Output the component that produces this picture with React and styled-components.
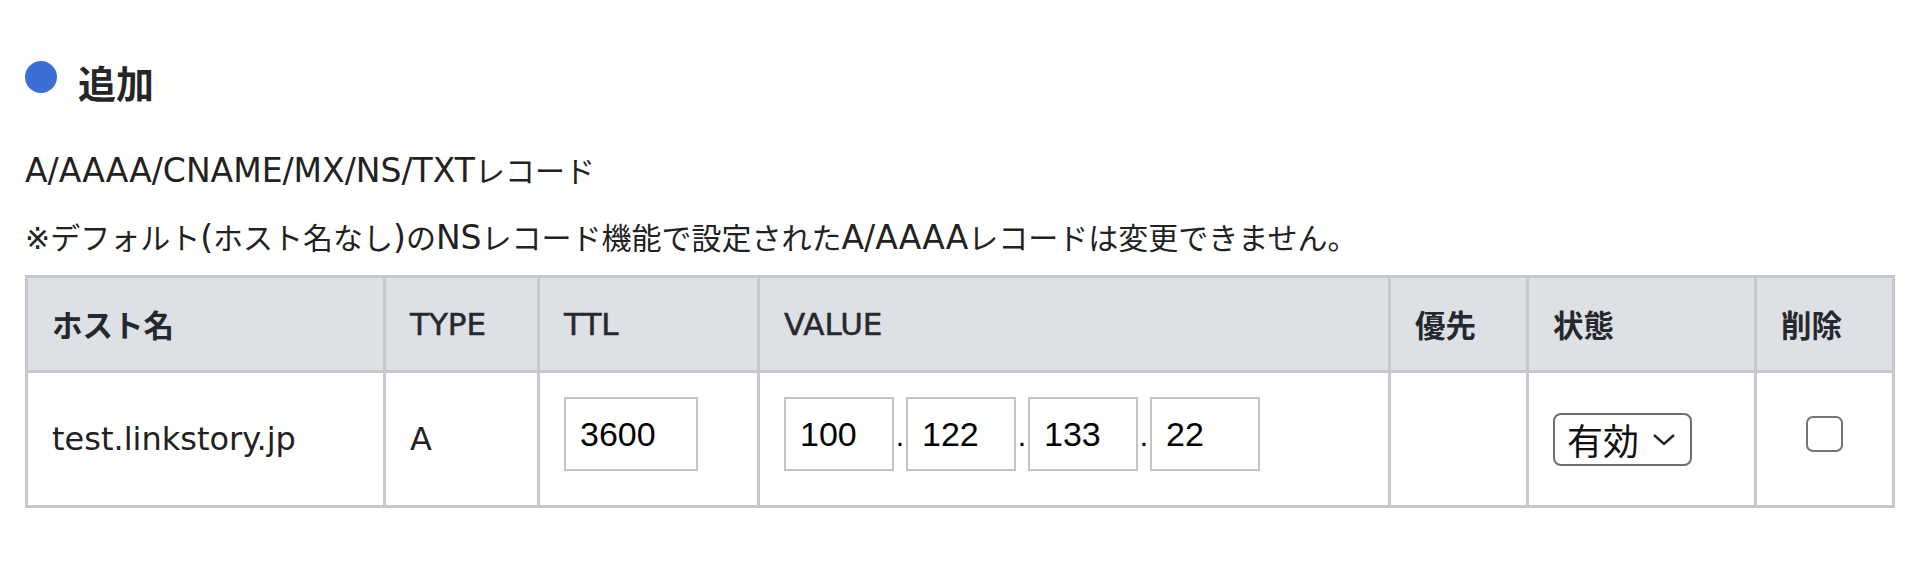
import React from "react";
import styled, { createGlobalStyle } from "styled-components";

const GlobalStyle = createGlobalStyle`
  html, body {
    margin: 0;
    padding: 0;
    background: #fff;
  }
  body {
    font-family: "Noto Sans CJK JP", "Noto Sans", sans-serif;
    color: #222;
  }
`;

const mixed = `"DejaVu Sans", "Noto Sans CJK JP", sans-serif`;

const Page = styled.div`
  padding: 61px 38px 40px 25px;
`;

const Heading = styled.h2`
  display: flex;
  align-items: center;
  gap: 21px;
  margin: 0;
  font-size: 38px;
  line-height: 42px;
  font-weight: 700;
  color: #262626;
`;

const Dot = styled.span`
  flex: none;
  width: 32px;
  height: 32px;
  margin-bottom: 10px;
  border-radius: 50%;
  background: #3b6fd6;
`;

const Note = styled.p`
  margin: ${(p) => p.$top}px 0 0;
  font-family: ${mixed};
  font-size: 30px;
  line-height: 40px;
  color: #222;
`;

const Latin = styled.span`
  font-size: 33px;
`;

const Table = styled.table`
  width: 1869px;
  margin-top: 16px;
  border-collapse: collapse;
  table-layout: fixed;
  border: 3px solid #c6c8cc;
`;

const Col = styled.col`
  width: ${(p) => p.$w}px;
`;

const Th = styled.th`
  height: 92px;
  padding: 0 24px;
  border: 3px solid #c6c8cc;
  background: #dde0e5;
  text-align: left;
  font-family: ${(p) => (p.$latin ? `"DejaVu Sans", sans-serif` : `"Noto Sans CJK JP", sans-serif`)};
  font-size: ${(p) => (p.$latin ? 31 : 30.5)}px;
  font-weight: ${(p) => (p.$latin ? 400 : 700)};
  -webkit-text-stroke: ${(p) => (p.$latin ? "0.5px #25282d" : "0")};
  color: #25282d;
`;

const Td = styled.td`
  height: 132px;
  padding: 0 24px;
  border: 3px solid #c6c8cc;
  font-family: ${mixed};
  font-size: 32px;
  color: #222;
  vertical-align: middle;
`;

const Fields = styled.div`
  display: flex;
  align-items: baseline;
  justify-content: ${(p) => (p.$center ? "center" : "flex-start")};
  margin-bottom: ${(p) => (p.$lift ? 10 : 0)}px;
`;

const Field = styled.input`
  box-sizing: border-box;
  width: ${(p) => p.$w}px;
  height: 74px;
  margin: 0;
  padding: 0 14px;
  border: 2.5px solid #c3c4c8;
  border-radius: 0;
  background: #fff;
  font-family: "Liberation Sans", Arial, sans-serif;
  font-size: 34px;
  color: #000;
  outline: none;
`;

const Sep = styled.span`
  width: 12px;
  text-align: center;
  font-family: "Liberation Sans", Arial, sans-serif;
  font-size: 30px;
  color: #000;
`;

const Select = styled.div`
  box-sizing: border-box;
  display: inline-flex;
  align-items: center;
  gap: 13px;
  width: 139px;
  height: 53px;
  padding: 0 10px 0 12px;
  border: 2px solid #6e6e6e;
  border-radius: 8px;
  font-family: "Noto Sans CJK JP", sans-serif;
  font-size: 36px;
  line-height: 1;
  color: #111;
`;

const Check = styled.span`
  box-sizing: border-box;
  display: block;
  width: 37px;
  height: 36px;
  border: 2.5px solid #757575;
  border-radius: 7px;
`;

const columns = [358, 154, 220, 631, 138, 228, 137.5];
const heads = [
  ["ホスト名"],
  ["TYPE", true],
  ["TTL", true],
  ["VALUE", true],
  ["優先"],
  ["状態"],
  ["削除"],
];
const ip = ["100", "122", "133", "22"];

export default function App() {
  return (
    <Page>
      <GlobalStyle />
      <Heading>
        <Dot />
        追加
      </Heading>
      <Note $top={48}>
        <Latin>A/AAAA/CNAME/MX/NS/TXT</Latin>レコード
      </Note>
      <Note $top={26}>
        ※デフォルト<Latin>(</Latin>ホスト名なし<Latin>)</Latin>の<Latin>NS</Latin>
        レコード機能で設定された<Latin>A/AAAA</Latin>レコードは変更できません。
      </Note>
      <Table>
        <colgroup>
          {columns.map((w, i) => (
            <Col key={i} $w={w} />
          ))}
        </colgroup>
        <thead>
          <tr>
            {heads.map(([label, latin]) => (
              <Th key={label} $latin={latin}>
                {label}
              </Th>
            ))}
          </tr>
        </thead>
        <tbody>
          <tr>
            <Td>test.linkstory.jp</Td>
            <Td>A</Td>
            <Td>
              <Fields $lift>
                <Field $w={134} defaultValue="3600" />
              </Fields>
            </Td>
            <Td>
              <Fields $lift>
                {ip.map((v, i) => (
                  <React.Fragment key={i}>
                    {i > 0 && <Sep>.</Sep>}
                    <Field $w={110} defaultValue={v} />
                  </React.Fragment>
                ))}
              </Fields>
            </Td>
            <Td />
            <Td>
              <Select>
                有効
                <svg width="24" height="13" viewBox="0 0 24 13" fill="none">
                  <polyline points="2,2 12,11 22,2" stroke="#222" strokeWidth="2.4" />
                </svg>
              </Select>
            </Td>
            <Td>
              <Fields $lift $center>
                <Check />
              </Fields>
            </Td>
          </tr>
        </tbody>
      </Table>
    </Page>
  );
}
